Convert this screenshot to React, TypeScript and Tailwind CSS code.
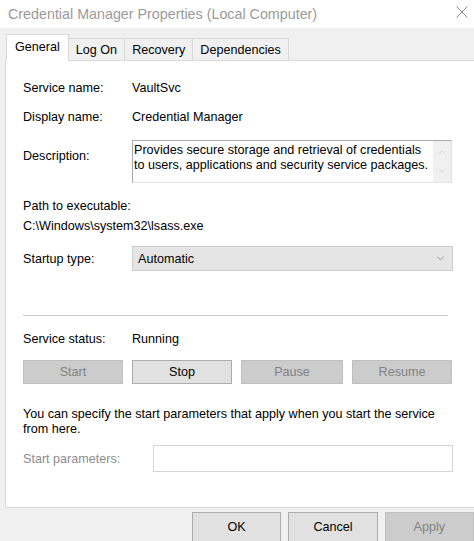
import { ChevronDown, ChevronUp } from 'lucide-react'

const font = { fontFamily: '"Liberation Sans", Arial, sans-serif' }

function Tab({ label, active }: { label: string; active?: boolean }) {
  return active ? (
    <div className="relative z-10 -mb-px flex h-[27px] items-center border border-b-0 border-[#d9d9d9] bg-white px-[8px] pb-[2px]">
      {label}
    </div>
  ) : (
    <div className="mt-[4px] flex h-[22px] items-center border border-l-0 border-b-0 border-[#d9d9d9] bg-[#f0f0f0] px-[7px]">
      {label}
    </div>
  )
}

function Btn({ label, disabled, w = 'w-[100px]' }: { label: string; disabled?: boolean; w?: string }) {
  return (
    <div
      className={`flex h-[24px] items-center justify-center border ${w} ${
        disabled
          ? 'border-[#bfbfbf] bg-[#cccccc] text-[#838383]'
          : 'border-[#adadad] bg-[#e1e1e1] text-black'
      }`}
    >
      {label}
    </div>
  )
}

function Row({ label, value }: { label: string; value: string }) {
  return (
    <div className="flex h-[16px] items-center">
      <div className="w-[109px]">{label}</div>
      <div>{value}</div>
    </div>
  )
}

export default function App() {
  return (
    <div
      className="flex h-[541px] w-[474px] flex-col overflow-hidden bg-[#f0f0f0] text-[12.6px] leading-[16px] text-black"
      style={font}
    >
      {/* title bar */}
      <div className="flex h-[28px] shrink-0 items-center justify-between bg-white pl-[8px] pr-[6px]">
        <span className="text-[14.3px] text-[#9a9a9a]">Credential Manager Properties (Local Computer)</span>
        <svg width="12" height="12" viewBox="0 0 12 12" className="mb-[4px]">
          <path d="M0.5 0.5 L11.5 11.5 M11.5 0.5 L0.5 11.5" stroke="#8a8a8a" strokeWidth="1" />
        </svg>
      </div>

      {/* tabs */}
      <div className="mt-[6px] flex pl-[6px]">
        <Tab label="General" active />
        <Tab label="Log On" />
        <Tab label="Recovery" />
        <Tab label="Dependencies" />
      </div>

      {/* panel */}
      <div className="ml-[5px] h-[448px] w-[490px] shrink-0 border border-[#d9d9d9] bg-white pl-[17px] pt-[19px]">
        <Row label="Service name:" value="VaultSvc" />
        <div className="mt-[13px]">
          <Row label="Display name:" value="Credential Manager" />
        </div>

        <div className="mt-[15px] flex">
          <div className="w-[109px] pt-[8px]">Description:</div>
          <div className="flex h-[43px] w-[320px] border border-[#a9a9a9] border-b-[#e3e3e3] border-r-[#e3e3e3]">
            <div className="flex-1 whitespace-nowrap pl-[1px] pt-[2px] leading-[15px]">
              <div>Provides secure storage and retrieval of credentials</div>
              <div>to users, applications and security service packages.</div>
            </div>
            <div className="flex w-[18px] flex-col items-center justify-around bg-[#f0f0f0] py-[2px] text-[#c2c2c2]">
              <ChevronUp size={10} strokeWidth={1.5} />
              <ChevronDown size={10} strokeWidth={1.5} />
            </div>
          </div>
        </div>

        <div className="mt-[15px]">Path to executable:</div>
        <div className="mt-[4px]">C:\Windows\system32\lsass.exe</div>

        <div className="mt-[12px] flex items-center">
          <div className="w-[109px]">Startup type:</div>
          <div className="flex h-[25px] w-[321px] items-center justify-between border border-[#cccccc] bg-[#e5e5e5] pl-[5px] pr-[6px]">
            <span>Automatic</span>
            <ChevronDown size={11} strokeWidth={1.5} className="text-[#6e6e6e]" />
          </div>
        </div>

        <div className="mt-[44px] h-px w-[425px] bg-[#c8c8c8]" />

        <div className="mt-[15px]">
          <Row label="Service status:" value="Running" />
        </div>

        <div className="mt-[13px] flex gap-[9px]">
          <Btn label="Start" disabled />
          <Btn label="Stop" />
          <Btn label="Pause" disabled w="w-[102px]" />
          <Btn label="Resume" disabled />
        </div>

        <div className="mt-[23px] w-[440px] leading-[15px]">
          You can specify the start parameters that apply when you start the service from here.
        </div>

        <div className="mt-[8px] flex items-center">
          <div className="w-[130px] text-[#8d8d8d]">Start parameters:</div>
          <div className="h-[27px] w-[300px] border border-[#d4d4d4] bg-white" />
        </div>
      </div>

      {/* dialog buttons */}
      <div className="mt-[4px] flex gap-[7px] pl-[192px]">
        <Btn label="OK" w="w-[90px] h-[30px]" />
        <Btn label="Cancel" w="w-[90px] h-[30px]" />
        <Btn label="Apply" disabled w="w-[90px] h-[30px]" />
      </div>
    </div>
  )
}
